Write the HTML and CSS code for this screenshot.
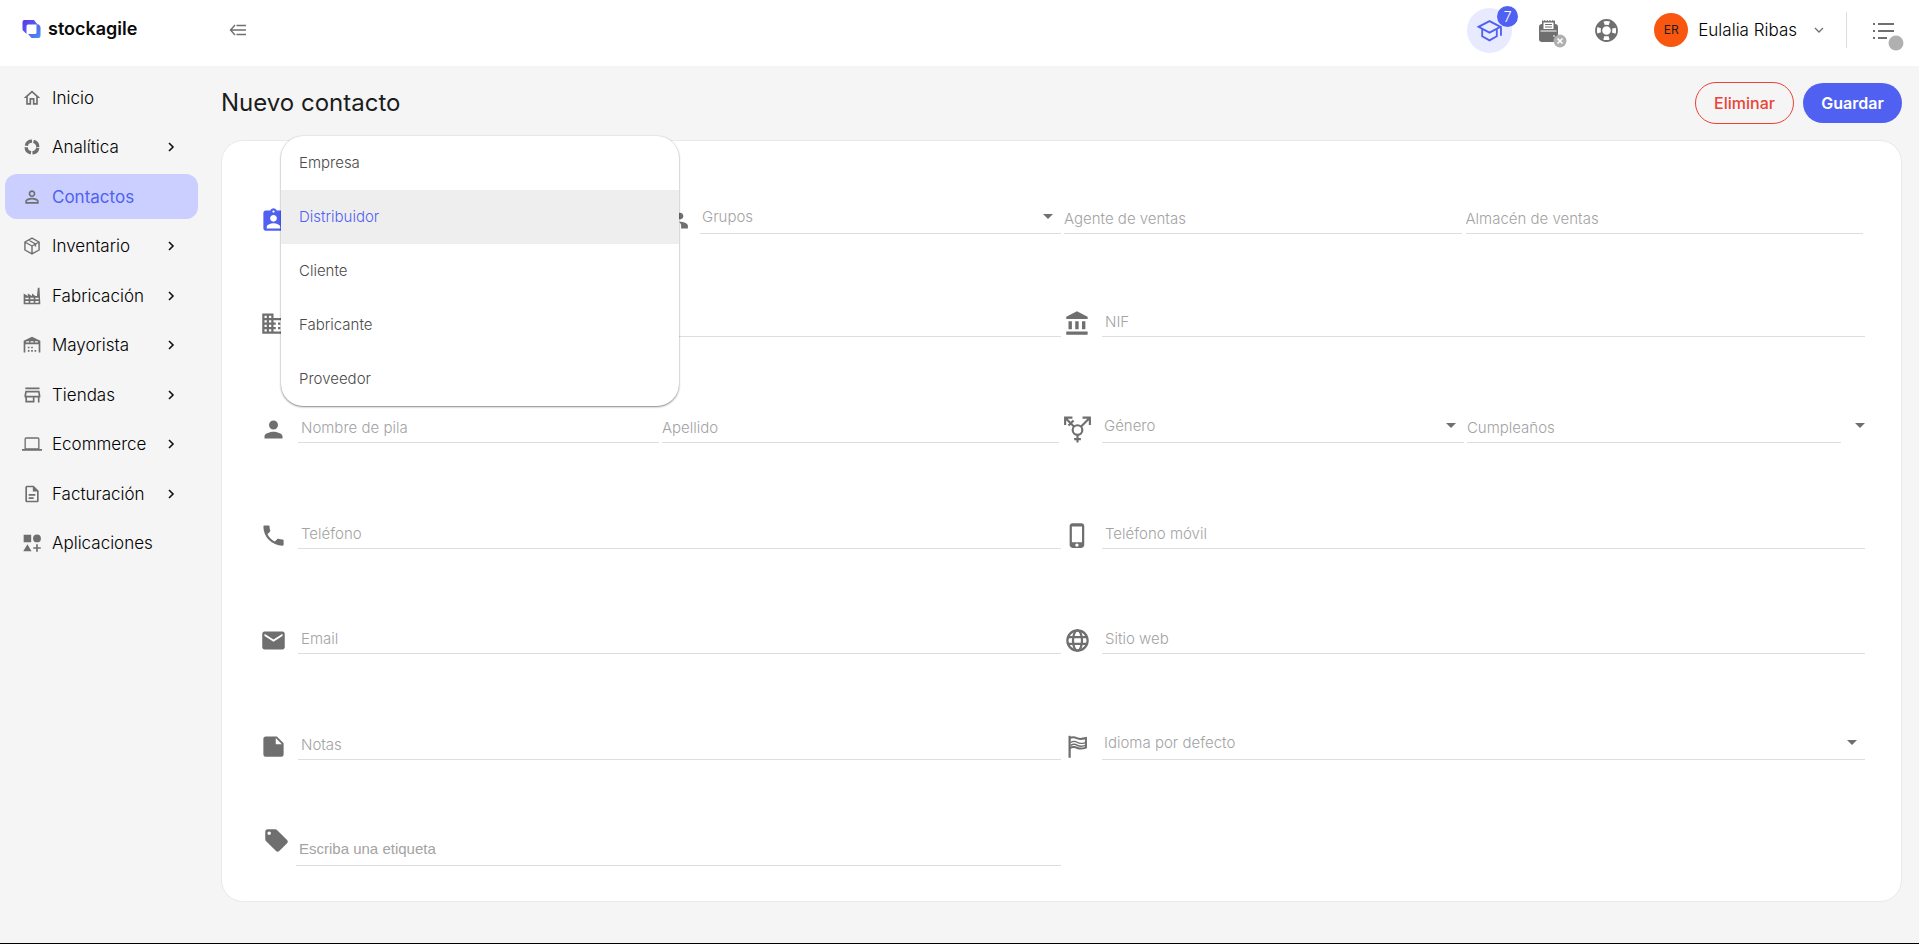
FILE: index.html
```html
<!DOCTYPE html>
<html lang="es">
<head>
<meta charset="utf-8">
<meta name="viewport" content="width=device-width, initial-scale=1">
<title>Nuevo contacto - stockagile</title>
<link rel="stylesheet" href="styles.css">
</head>
<body>
<svg class="sprite" aria-hidden="true">
  <symbol id="i-home" viewBox="0 0 24 24"><path d="M12 5.69l5 4.5V18h-2v-6H9v6H7v-7.81l5-4.5M12 3L2 12h3v8h6v-6h2v6h6v-8h3L12 3"/></symbol>
  <symbol id="i-donut" viewBox="0 0 24 24"><circle cx="12" cy="12" r="7" fill="none" stroke="currentColor" stroke-width="4" stroke-dasharray="9.200 1.800" stroke-dashoffset="-1"/></symbol>
  <symbol id="i-person-o" viewBox="0 0 24 24"><path d="M12 5.9a2.1 2.1 0 1 1 0 4.2 2.1 2.1 0 0 1 0-4.2m0 9c2.97 0 6.1 1.46 6.1 2.1v1.1H5.9V17c0-.64 3.13-2.1 6.1-2.1M12 4C9.79 4 8 5.79 8 8s1.79 4 4 4 4-1.79 4-4-1.79-4-4-4zm0 9c-2.67 0-8 1.34-8 4v3h16v-3c0-2.66-5.33-4-8-4z"/></symbol>
  <symbol id="i-box" viewBox="0 0 24 24"><path fill="none" stroke="currentColor" stroke-width="1.7" stroke-linejoin="round" d="M12 2.5l8.5 4.7v9.6L12 21.5l-8.5-4.7V7.2zM3.5 7.2L12 12l8.5-4.8M12 12v9.5M7.8 4.8l8.5 4.8M16.2 9.7v3"/></symbol>
  <symbol id="i-factory" viewBox="0 0 24 24"><path fill-rule="evenodd" d="M2 22V9l5 3V9l5 3V9l4 3h2l1-10h2l1 20zM4 14v2h4v-2zm6 0v2h4v-2zm6 0v2h4v-2zM4 18v2h4v-2zm6 0v2h4v-2zm6 0v2h4v-2z"/></symbol>
  <symbol id="i-warehouse" viewBox="0 0 24 24"><path fill-rule="evenodd" d="M12 2l10 5v14h-2V11H4v10H2V7zM5 7.500V9h3.500V7.500zm5.200 0V9h3.600V7.500zm5.300 0V9H19V7.500zM7 14h2v2H7zm4 0h2v2h-2zM7 18h2v2H7zm4 0h2v2h-2zm4 0h2v2h-2z"/></symbol>
  <symbol id="i-store" viewBox="0 0 24 24"><path fill-rule="evenodd" d="M4 3h17v2H4zM4 7h17l1 5v3h-1v6h-2v-6h-4v6H4v-6H3v-3zM5.600 9L5 13h15l-.6-4zM6 15v4h7v-4z"/></symbol>
  <symbol id="i-laptop" viewBox="0 0 24 24"><path d="M21 18V6c0-1.100-.9-2-2-2H5c-1.100 0-2 .9-2 2v12H0v2h24v-2zM4.600 5.600h14.800V17H4.600z"/></symbol>
  <symbol id="i-doc" viewBox="0 0 24 24"><path d="M8 16h6v2H8zm0-4h8v2H8zm6-10H6c-1.100 0-2 .9-2 2v16c0 1.100.9 2 2 2h12c1.100 0 2-.9 2-2V8zm4 18H6V4h7v5h5z"/></symbol>
  <symbol id="i-apps" viewBox="0 0 24 24"><path d="M2 2h9v9H2zM6.500 13.500l5 8.500h-10zM17 13.500h2v3.500h3.500v2H19v3.500h-2V19h-3.500v-2H17z"/><circle cx="18" cy="6.500" r="4.700"/></symbol>
  <symbol id="i-next" viewBox="0 0 8 10"><path fill="none" stroke="currentColor" stroke-width="1.600" d="M2 1l4 4-4 4"/></symbol>
  <symbol id="i-badge" viewBox="0 0 24 24"><path d="M19 3h-4.180C14.400 1.840 13.300 1 12 1s-2.400.84-2.820 2H5c-1.100 0-2 .9-2 2v14c0 1.100.9 2 2 2h14c1.100 0 2-.9 2-2V5c0-1.100-.9-2-2-2zm-7 0c.55 0 1 .45 1 1s-.45 1-1 1-1-.45-1-1 .45-1 1-1zm0 4c1.660 0 3 1.340 3 3s-1.340 3-3 3-3-1.340-3-3 1.340-3 3-3zm6 12H6v-1.400c0-2 4-3.100 6-3.100s6 1.100 6 3.100V19z"/></symbol>
  <symbol id="i-group" viewBox="0 0 24 24"><path d="M16 11c1.660 0 2.990-1.340 2.990-3S17.660 5 16 5c-1.660 0-3 1.340-3 3s1.340 3 3 3zm-8 0c1.660 0 2.990-1.340 2.990-3S9.660 5 8 5C6.340 5 5 6.340 5 8s1.340 3 3 3zm0 2c-2.330 0-7 1.170-7 3.500V19h14v-2.500c0-2.330-4.670-3.500-7-3.500zm8 0c-.29 0-.62.02-.97.05 1.160.84 1.970 1.970 1.970 3.450V19h6v-2.500c0-2.330-4.670-3.500-7-3.500z"/></symbol>
  <symbol id="i-building" viewBox="0 0 24 24"><path d="M12 7V3H2v18h20V7H12zM6 19H4v-2h2v2zm0-4H4v-2h2v2zm0-4H4V9h2v2zm0-4H4V5h2v2zm4 12H8v-2h2v2zm0-4H8v-2h2v2zm0-4H8V9h2v2zm0-4H8V5h2v2zm10 12h-8v-2h2v-2h-2v-2h2v-2h-2V9h8v10zm-2-8h-2v2h2v-2zm0 4h-2v2h2v-2z"/></symbol>
  <symbol id="i-bank" viewBox="0 0 24 24"><path d="M4 10v7h3v-7H4zm6 0v7h3v-7h-3zM2 22h19v-3H2v3zm14-12v7h3v-7h-3zm-4.500-9L2 6v2h19V6l-9.500-5z"/></symbol>
  <symbol id="i-person" viewBox="0 0 24 24"><path d="M12 12c2.210 0 4-1.790 4-4s-1.790-4-4-4-4 1.790-4 4 1.790 4 4 4zm0 2c-2.670 0-8 1.340-8 4v2h16v-2c0-2.660-5.330-4-8-4z"/></symbol>
  <symbol id="i-gender" viewBox="0 0 24 24"><g fill="none" stroke="currentColor" stroke-width="1.900"><circle cx="12" cy="12.500" r="4.300"/><path d="M12 17v6.500M9 20.500h6M15 9.500l7.500-7.500M16.500 1.500H23V8M9 9.500L1.500 2M1 8V1.500h6.500M4 8.500l4.500-4.500"/></g></symbol>
  <symbol id="i-phone" viewBox="0 0 24 24"><path d="M6.620 10.790c1.440 2.830 3.760 5.140 6.590 6.590l2.200-2.200c.27-.27.67-.36 1.020-.24 1.120.37 2.330.57 3.570.57.55 0 1 .45 1 1V20c0 .55-.45 1-1 1-9.390 0-17-7.610-17-17 0-.55.45-1 1-1h3.500c.55 0 1 .45 1 1 0 1.250.2 2.450.57 3.570.11.35.03.74-.25 1.020l-2.200 2.200z"/></symbol>
  <symbol id="i-mobile" viewBox="0 0 24 24"><path d="M15.500 1h-8C6.120 1 5 2.120 5 3.500v17C5 21.880 6.120 23 7.500 23h8c1.380 0 2.500-1.120 2.500-2.500v-17C18 2.120 16.880 1 15.500 1zm-4 21c-.83 0-1.500-.67-1.500-1.500s.67-1.500 1.500-1.500 1.500.67 1.500 1.500-.67 1.500-1.500 1.500zm4.500-4H7V4h9v14z"/></symbol>
  <symbol id="i-mail" viewBox="0 0 24 24"><path d="M20 4H4c-1.100 0-2 .9-2 2v12c0 1.100.9 2 2 2h16c1.100 0 2-.9 2-2V6c0-1.100-.9-2-2-2zm0 4l-8 5-8-5V6l8 5 8-5v2z"/></symbol>
  <symbol id="i-globe" viewBox="0 0 24 24"><g fill="none" stroke="currentColor" stroke-width="2"><circle cx="12" cy="12" r="9"/><ellipse cx="12" cy="12" rx="4" ry="9"/><path d="M4 9h16M4 15h16"/></g></symbol>
  <symbol id="i-note" viewBox="0 0 24 24"><path d="M14 10V4.500l5.500 5.500M5 3c-1.110 0-2 .89-2 2v14a2 2 0 0 0 2 2h14a2 2 0 0 0 2-2V9l-6-6H5z"/></symbol>
  <symbol id="i-flag" viewBox="0 0 24 24"><g fill="none" stroke="currentColor"><path stroke-width="2" d="M5 2.500V22"/><path stroke-width="1.800" d="M5 4.500c3.500-1.500 5-.5 7 .3s4 .7 7.500-.3v8.500c-3 1-5.500 1.200-7.500.3s-4-1.500-7 .2"/><path stroke-width="1.200" d="M6 8.500c3-2 4.500-1 6 0s4 1 7 0M6 11c3-2 4.500-1 6 0s4 1 7 0"/></g></symbol>
  <symbol id="i-tag" viewBox="0 0 24 24"><path d="M21.410 11.580l-9-9C12.050 2.220 11.550 2 11 2H4c-1.100 0-2 .9-2 2v7c0 .55.22 1.050.59 1.420l9 9c.36.36.86.58 1.410.58.55 0 1.050-.22 1.410-.59l7-7c.37-.36.59-.86.59-1.410 0-.55-.23-1.060-.59-1.420zM5.500 7C4.670 7 4 6.330 4 5.500S4.670 4 5.500 4 7 4.670 7 5.500 6.330 7 5.500 7z"/></symbol>
</svg>

<header class="topbar">
  <a class="brand" href="#">
    <svg class="brand-mark" viewBox="0 0 20 20" aria-hidden="true">
      <defs><linearGradient id="brand-fill" x1="0" y1="0" x2="1" y2="1"><stop offset="0" stop-color="#5b35e8"/><stop offset="1" stop-color="#4b8df5"/></linearGradient></defs>
      <path fill="url(#brand-fill)" fill-rule="evenodd" d="M3 1h9.500L16 5.500h1.500L19 8v8.500a2.500 2.500 0 0 1-2.500 2.500H10L6.500 15H5l-4-4V3a2 2 0 0 1 2-2zM6.500 5.500a1.500 1.500 0 0 0-1.500 1.500V15h8.500a1.500 1.500 0 0 0 1.500-1.500v-8z"/>
    </svg>
    <span>stockagile</span>
  </a>
  <button class="icon-btn collapse" type="button" aria-label="Contraer menú">
    <svg viewBox="0 0 18 12" aria-hidden="true"><path fill="none" stroke="currentColor" stroke-width="1.400" d="M6 1L1.500 6 6 11M1.500 6H17M7.500 1.500H17M7.500 10.500H17"/></svg>
  </button>
  <div class="tools">
    <button class="icon-btn academy" type="button" aria-label="Academia">
      <svg viewBox="0 0 24 24" aria-hidden="true"><g fill="none" stroke="currentColor" stroke-width="1.800"><path d="M12 3L1.500 8.500 12 14l10.500-5.500zM5 11v6.500l7 4 7-4V11M23 8.500V17"/></g></svg>
      <span class="count">7</span>
    </button>
    <button class="icon-btn register" type="button" aria-label="Caja">
      <svg viewBox="0 0 28 29" aria-hidden="true">
        <path fill="#6f6f6f" d="M3 1l1.300 1.200L5.700 1 7 2.200 8.300 1l1.400 1.200L11 1l1.300 1.200L13.700 1 15 2.200 16 1v4a3 3 0 0 1 3 3v12a3 3 0 0 1-3 3H3a3 3 0 0 1-3-3V8a3 3 0 0 1 3-3z"/>
        <path fill="#fff" d="M4.500 3.500h10V10h-10z"/>
        <path stroke="#6f6f6f" stroke-width="1.100" d="M6 5.500h7M6 8h7"/>
        <path stroke="#fff" stroke-width="1.200" d="M1.500 12h16M14 17h2"/>
        <circle cx="21" cy="22" r="6.500" fill="#b0b0b0"/>
        <path stroke="#fff" stroke-width="1.600" d="M18.500 19.500l5 5M23.500 19.500l-5 5"/>
      </svg>
    </button>
    <button class="icon-btn help" type="button" aria-label="Ayuda">
      <svg viewBox="0 0 24 24" aria-hidden="true"><circle cx="12" cy="12" r="8.200" fill="none" stroke="#6f6f6f" stroke-width="7.400"/><circle cx="12" cy="12" r="8" fill="none" stroke="#fff" stroke-width="4" stroke-dasharray="5.500 7.066" stroke-dashoffset="2.750"/></svg>
    </button>
    <button class="user" type="button">
      <span class="avatar">ER</span>
      <span class="user-name">Eulalia Ribas</span>
      <svg class="user-arrow" viewBox="0 0 10 6" aria-hidden="true"><path fill="none" stroke="currentColor" stroke-width="1.300" d="M1 1l4 4 4-4"/></svg>
    </button>
    <span class="divider"></span>
    <button class="icon-btn tasks" type="button" aria-label="Tareas">
      <svg viewBox="0 0 32 30" aria-hidden="true"><path stroke="#6f6f6f" stroke-width="2" d="M1 3h2M6 3h16M1 10h2M6 10h16M1 17h2M6 17h9"/><circle cx="24" cy="22" r="7.500" fill="#b0b0b0"/></svg>
    </button>
  </div>
</header>

<div class="shell">
  <nav class="sidebar" aria-label="Principal">
    <a class="nav-item" href="#"><svg><use href="#i-home"/></svg><span>Inicio</span></a>
    <a class="nav-item" href="#"><svg><use href="#i-donut"/></svg><span>Analítica</span><svg class="next"><use href="#i-next"/></svg></a>
    <a class="nav-item active" href="#" aria-current="page"><svg><use href="#i-person-o"/></svg><span>Contactos</span></a>
    <a class="nav-item" href="#"><svg><use href="#i-box"/></svg><span>Inventario</span><svg class="next"><use href="#i-next"/></svg></a>
    <a class="nav-item" href="#"><svg><use href="#i-factory"/></svg><span>Fabricación</span><svg class="next"><use href="#i-next"/></svg></a>
    <a class="nav-item" href="#"><svg><use href="#i-warehouse"/></svg><span>Mayorista</span><svg class="next"><use href="#i-next"/></svg></a>
    <a class="nav-item" href="#"><svg><use href="#i-store"/></svg><span>Tiendas</span><svg class="next"><use href="#i-next"/></svg></a>
    <a class="nav-item" href="#"><svg><use href="#i-laptop"/></svg><span>Ecommerce</span><svg class="next"><use href="#i-next"/></svg></a>
    <a class="nav-item" href="#"><svg><use href="#i-doc"/></svg><span>Facturación</span><svg class="next"><use href="#i-next"/></svg></a>
    <a class="nav-item" href="#"><svg><use href="#i-apps"/></svg><span>Aplicaciones</span></a>
  </nav>

  <main class="main">
    <div class="page-head">
      <h1>Nuevo contacto</h1>
      <button class="btn btn-outline" type="button">Eliminar</button>
      <button class="btn btn-solid" type="submit" form="contact">Guardar</button>
    </div>

    <form class="card" id="contact">
      <div class="half">
        <svg class="ico accent"><use href="#i-badge"/></svg>
        <div class="pick">
          <select aria-label="Tipo"><option></option></select>
          <ul class="menu" role="listbox" aria-label="Tipo de contacto">
            <li role="option">Empresa</li>
            <li role="option" class="selected" aria-selected="true">Distribuidor</li>
            <li role="option">Cliente</li>
            <li role="option">Fabricante</li>
            <li role="option">Proveedor</li>
          </ul>
        </div>
        <svg class="ico group"><use href="#i-group"/></svg>
        <div class="pick"><select aria-label="Grupos"><option>Grupos</option></select></div>
      </div>
      <div class="half pair">
        <input class="flush" type="text" aria-label="Agente de ventas" placeholder="Agente de ventas">
        <input class="flush" type="text" aria-label="Almacén de ventas" placeholder="Almacén de ventas">
      </div>

      <div class="half"><svg class="ico"><use href="#i-building"/></svg><input type="text" aria-label="Empresa"></div>
      <div class="half"><svg class="ico"><use href="#i-bank"/></svg><input type="text" aria-label="NIF" placeholder="NIF"></div>

      <div class="half">
        <svg class="ico"><use href="#i-person"/></svg>
        <div class="names">
          <input type="text" aria-label="Nombre de pila" placeholder="Nombre de pila">
          <input class="flush" type="text" aria-label="Apellido" placeholder="Apellido">
        </div>
      </div>
      <div class="half">
        <svg class="ico"><use href="#i-gender"/></svg>
        <div class="person-data">
          <div class="pick"><select aria-label="Género"><option>Género</option></select></div>
          <div class="date"><input class="flush" type="text" aria-label="Cumpleaños" placeholder="Cumpleaños"></div>
        </div>
      </div>

      <div class="half"><svg class="ico"><use href="#i-phone"/></svg><input type="tel" aria-label="Teléfono" placeholder="Teléfono"></div>
      <div class="half"><svg class="ico"><use href="#i-mobile"/></svg><input type="tel" aria-label="Teléfono móvil" placeholder="Teléfono móvil"></div>

      <div class="half"><svg class="ico"><use href="#i-mail"/></svg><input type="email" aria-label="Email" placeholder="Email"></div>
      <div class="half"><svg class="ico"><use href="#i-globe"/></svg><input type="url" aria-label="Sitio web" placeholder="Sitio web"></div>

      <div class="half"><svg class="ico"><use href="#i-note"/></svg><input type="text" aria-label="Notas" placeholder="Notas"></div>
      <div class="half"><svg class="ico"><use href="#i-flag"/></svg><div class="pick"><select aria-label="Idioma por defecto"><option>Idioma por defecto</option></select></div></div>

      <div class="half tags"><svg class="ico"><use href="#i-tag"/></svg><input type="text" aria-label="Etiquetas" placeholder="Escriba una etiqueta"></div>
    </form>
  </main>
</div>
</body>
</html>
```

FILE: styles.css
```css
:root {
  --accent: #5061f2;
  --ink: #1c1c1c;
  --icon: #6f6f6f;
  --muted: #a3a3a3;
  --line: #dedede;
  --red: #ea4335;
}

* { box-sizing: border-box; }

body {
  margin: 0;
  min-height: 100vh;
  display: flex;
  flex-direction: column;
  background: #f5f5f5;
  border-bottom: 1px solid #000;
  color: var(--ink);
  font-family: Inter, "Liberation Sans", sans-serif;
  font-size: 16px;
  line-height: 20px;
}

button, input, select { font: inherit; color: inherit; }
button { border: 0; padding: 0; background: none; cursor: pointer; }
a { color: inherit; text-decoration: none; }
svg { display: block; fill: currentColor; flex: none; }
.sprite { position: absolute; width: 0; height: 0; }

/* Top bar */
.topbar {
  display: flex;
  align-items: center;
  height: 66px;
  padding: 0 15px 6px 21px;
  background: #fff;
}
.brand {
  display: flex;
  align-items: center;
  gap: 6px;
  width: 208px;
  padding-bottom: 2px;
  color: #0a0a0a;
  font-weight: 600;
  font-size: 18px;
}
.brand-mark { width: 21px; height: 20px; }
.collapse { color: var(--icon); }
.collapse svg { width: 18px; height: 12px; }
.tools { display: flex; align-items: center; margin-left: auto; }
.academy {
  position: relative;
  display: grid;
  place-items: center;
  width: 45px;
  height: 45px;
  margin-right: 27px;
  border-radius: 50%;
  background: #e8eaff;
  color: var(--accent);
}
.academy svg { width: 25px; height: 25px; }
.count {
  position: absolute;
  top: -2px;
  right: -6px;
  width: 21px;
  height: 21px;
  border-radius: 50%;
  background: var(--accent);
  color: #fff;
  font-size: 14px;
  font-weight: 300;
  line-height: 21px;
}
.register { margin-right: 28px; padding-top: 7px; }
.register svg { width: 28px; height: 29px; }
.help { margin-right: 36px; }
.help svg { width: 23px; height: 23px; }
.user { display: flex; align-items: center; }
.avatar {
  width: 34px;
  height: 34px;
  margin-right: 10px;
  border-radius: 50%;
  background: #f95710;
  font-size: 12px;
  line-height: 34px;
}
.user-name { margin-right: 17px; font-size: 17px; font-weight: 300; color: #000; }
.user-arrow { width: 10px; height: 6px; color: var(--icon); }
.divider { width: 1px; height: 36px; margin: 0 25px 0 22px; background: #ddd; }
.tasks { padding-top: 11px; }
.tasks svg { width: 32px; height: 30px; }

/* Layout */
.shell { display: flex; flex: 1; align-items: flex-start; }
.main { flex: 1; min-width: 0; padding: 16px 17px 41px 0; }

/* Sidebar */
.sidebar {
  display: flex;
  flex-direction: column;
  justify-content: space-between;
  flex: none;
  width: 221px;
  min-height: 500px;
  padding: 9px 23px 0 5px;
}
.nav-item {
  display: flex;
  align-items: center;
  gap: 10px;
  height: 45px;
  padding: 0 23px 0 17px;
  border-radius: 12px;
  font-size: 17px;
  font-weight: 300;
  color: #000;
}
.nav-item svg { width: 20px; height: 20px; color: var(--icon); }
.nav-item .next { width: 8px; height: 10px; margin-left: auto; color: #111; }
.nav-item.active { background: #cacfff; color: var(--accent); font-weight: 400; }

/* Page head */
.page-head {
  display: flex;
  align-items: center;
  gap: 9px;
  height: 42px;
  margin-bottom: 16px;
}
.page-head h1 { margin: 0 auto 0 0; font-size: 24px; font-weight: 400; line-height: 28px; }
.btn { width: 99px; height: 40px; border-radius: 21px; font-weight: 500; }
.btn-outline { height: 42px; border: 1px solid var(--red); color: var(--red); }
.btn-solid { background: var(--accent); color: #fff; font-weight: 600; }

/* Form card */
.card {
  display: grid;
  grid-template-columns: 1fr 1fr;
  grid-template-rows: 93px 103px 106px 106px 105px 106px 106px;
  column-gap: 3px;
  padding: 0 36px 35px 38px;
  border: 1px solid #e9e9e9;
  border-radius: 22px;
  background: #fff;
}
.half { display: flex; align-items: flex-end; gap: 11px; min-width: 0; }
.ico { width: 27px; height: 27px; color: var(--icon); }
.ico.accent { color: var(--accent); }
.ico.group { margin-left: -8px; }

input, select {
  flex: 1;
  width: 100%;
  min-width: 0;
  height: 30px;
  margin: 0;
  border: 0;
  border-bottom: 1px solid var(--line);
  border-radius: 0;
  outline: 0;
  background: none;
  font-size: 15px;
  font-weight: 300;
}
input { padding: 0 3px; }
input.flush { padding-left: 0; }
input::placeholder { color: var(--muted); opacity: 1; }

.pick { position: relative; flex: 1; min-width: 0; }
.pick::after, .date::after {
  content: "";
  border: 5px solid transparent;
  border-top-color: var(--icon);
  border-bottom: 0;
}
.pick::after { position: absolute; right: 8px; bottom: 15px; pointer-events: none; }
select { display: block; appearance: none; padding: 0 24px 4px 2px; color: var(--muted); }

.pair { display: grid; grid-template-columns: 1fr 1fr; gap: 4px; padding-right: 2px; }
.names { display: grid; grid-template-columns: 10fr 11fr; gap: 3px; flex: 1; padding-right: 2px; }
.person-data { display: grid; grid-template-columns: 10fr 11fr; gap: 3px; flex: 1; }
.date { display: flex; align-items: center; gap: 14px; }
.date::after { margin-bottom: 5px; }

.tags { padding-left: 3px; gap: 6px; }
.tags .ico { margin-bottom: 12px; }
.tags input {
  padding-bottom: 4px;
  font-family: "Liberation Sans", Arial, sans-serif;
  font-weight: 400;
}

/* Open drop-down */
.menu {
  position: absolute;
  z-index: 1;
  left: -17px;
  bottom: -172px;
  width: calc(100% + 37px);
  margin: 0;
  padding: 0;
  overflow: hidden;
  list-style: none;
  border-radius: 22px;
  background: #fff;
  box-shadow: 0 1px 2px rgba(0, 0, 0, .45), 0 0 2px rgba(0, 0, 0, .12);
  color: #4a4a4a;
  font-size: 15px;
  font-weight: 300;
}
.menu li { padding: 17px 18px; }
.menu .selected { background: #eee; color: var(--accent); }
```
